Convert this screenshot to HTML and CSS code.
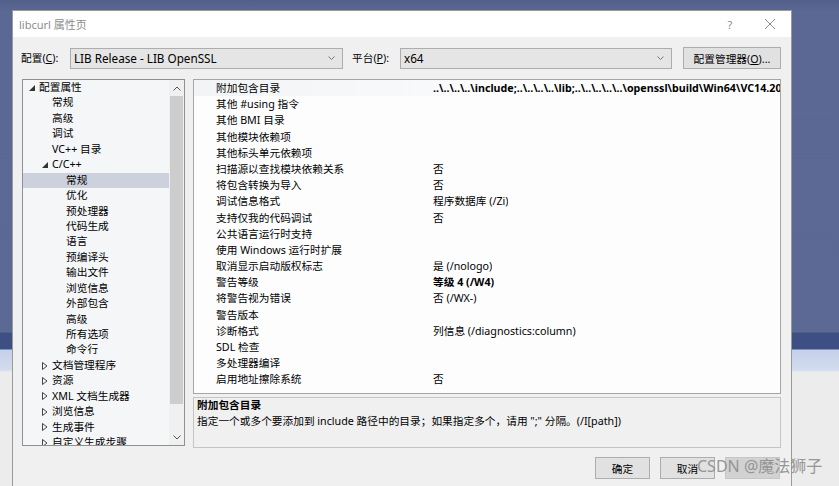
FILE: index.html
```html
<!DOCTYPE html>
<html lang="zh-CN">
<head>
    <meta charset="UTF-8">
    <title>libcurl 属性页</title>
    <link rel="stylesheet" href="styles.css">
</head>
<body>
    <div class="dialog">
        <div class="titlebar">
            <span class="title">libcurl 属性页</span>
            <span class="help">?</span>
            <svg class="close" width="12" height="12" viewBox="0 0 12 12"><path d="M1 1L11 11M11 1L1 11" stroke="#8a8a8a" stroke-width="1" fill="none"/></svg>
        </div>

        <div class="toolbar">
            <span class="tb-label">配置(<u>C</u>):</span>
            <div class="select cfg-select">
                <span>LIB Release - LIB OpenSSL</span>
                <svg class="chev" width="7" height="4" viewBox="0 0 7 4"><path d="M0.5 0.5L3.5 3.5L6.5 0.5" stroke="#777" fill="none"/></svg>
            </div>
            <span class="tb-label plat-label">平台(<u>P</u>):</span>
            <div class="select plat-select">
                <span>x64</span>
                <svg class="chev" width="7" height="4" viewBox="0 0 7 4"><path d="M0.5 0.5L3.5 3.5L6.5 0.5" stroke="#777" fill="none"/></svg>
            </div>
            <button class="btn btn-mgr">配置管理器(<u>O</u>)...</button>
        </div>

        <div class="main">
            <div class="tree">
                <ul class="tree-list">
                    <li class="lv0"><span class="arrow"><svg width="6" height="6" viewBox="0 0 6 6"><path d="M6 0V6H0Z" fill="#333"/></svg></span>配置属性</li>
                    <li class="lv1"><span class="arrow"></span>常规</li>
                    <li class="lv1"><span class="arrow"></span>高级</li>
                    <li class="lv1"><span class="arrow"></span>调试</li>
                    <li class="lv1"><span class="arrow"></span>VC++ 目录</li>
                    <li class="lv1"><span class="arrow"><svg width="6" height="6" viewBox="0 0 6 6"><path d="M6 0V6H0Z" fill="#333"/></svg></span>C/C++</li>
                    <li class="lv2 selected"><span class="arrow"></span>常规</li>
                    <li class="lv2"><span class="arrow"></span>优化</li>
                    <li class="lv2"><span class="arrow"></span>预处理器</li>
                    <li class="lv2"><span class="arrow"></span>代码生成</li>
                    <li class="lv2"><span class="arrow"></span>语言</li>
                    <li class="lv2"><span class="arrow"></span>预编译头</li>
                    <li class="lv2"><span class="arrow"></span>输出文件</li>
                    <li class="lv2"><span class="arrow"></span>浏览信息</li>
                    <li class="lv2"><span class="arrow"></span>外部包含</li>
                    <li class="lv2"><span class="arrow"></span>高级</li>
                    <li class="lv2"><span class="arrow"></span>所有选项</li>
                    <li class="lv2"><span class="arrow"></span>命令行</li>
                    <li class="lv1"><span class="arrow"><svg width="6" height="8" viewBox="0 0 6 8"><path d="M0.5 0.5L5 4L0.5 7.5Z" stroke="#444" fill="none"/></svg></span>文档管理程序</li>
                    <li class="lv1"><span class="arrow"><svg width="6" height="8" viewBox="0 0 6 8"><path d="M0.5 0.5L5 4L0.5 7.5Z" stroke="#444" fill="none"/></svg></span>资源</li>
                    <li class="lv1"><span class="arrow"><svg width="6" height="8" viewBox="0 0 6 8"><path d="M0.5 0.5L5 4L0.5 7.5Z" stroke="#444" fill="none"/></svg></span>XML 文档生成器</li>
                    <li class="lv1"><span class="arrow"><svg width="6" height="8" viewBox="0 0 6 8"><path d="M0.5 0.5L5 4L0.5 7.5Z" stroke="#444" fill="none"/></svg></span>浏览信息</li>
                    <li class="lv1"><span class="arrow"><svg width="6" height="8" viewBox="0 0 6 8"><path d="M0.5 0.5L5 4L0.5 7.5Z" stroke="#444" fill="none"/></svg></span>生成事件</li>
                    <li class="lv1"><span class="arrow"><svg width="6" height="8" viewBox="0 0 6 8"><path d="M0.5 0.5L5 4L0.5 7.5Z" stroke="#444" fill="none"/></svg></span>自定义生成步骤</li>
                </ul>
                <div class="vscroll">
                    <svg class="sb-arrow" width="8" height="5" viewBox="0 0 8 5"><path d="M0.5 4.5L4 1L7.5 4.5" stroke="#555" fill="none"/></svg>
                    <div class="sb-thumb"></div>
                    <svg class="sb-arrow sb-down" width="8" height="5" viewBox="0 0 8 5"><path d="M0.5 0.5L4 4L7.5 0.5" stroke="#555" fill="none"/></svg>
                </div>
            </div>

            <div class="right">
                <div class="grid">
                    <div class="row first"><span class="name">附加包含目录</span><span class="val bold">..\..\..\..\include;..\..\..\..\lib;..\..\..\..\..\openssl\build\Win64\VC14.20\include</span></div>
                    <div class="row"><span class="name">其他 #using 指令</span><span class="val"></span></div>
                    <div class="row"><span class="name">其他 BMI 目录</span><span class="val"></span></div>
                    <div class="row"><span class="name">其他模块依赖项</span><span class="val"></span></div>
                    <div class="row"><span class="name">其他标头单元依赖项</span><span class="val"></span></div>
                    <div class="row"><span class="name">扫描源以查找模块依赖关系</span><span class="val">否</span></div>
                    <div class="row"><span class="name">将包含转换为导入</span><span class="val">否</span></div>
                    <div class="row"><span class="name">调试信息格式</span><span class="val">程序数据库 (/Zi)</span></div>
                    <div class="row"><span class="name">支持仅我的代码调试</span><span class="val">否</span></div>
                    <div class="row"><span class="name">公共语言运行时支持</span><span class="val"></span></div>
                    <div class="row"><span class="name">使用 Windows 运行时扩展</span><span class="val"></span></div>
                    <div class="row"><span class="name">取消显示启动版权标志</span><span class="val">是 (/nologo)</span></div>
                    <div class="row"><span class="name">警告等级</span><span class="val bold">等级 4 (/W4)</span></div>
                    <div class="row"><span class="name">将警告视为错误</span><span class="val">否 (/WX-)</span></div>
                    <div class="row"><span class="name">警告版本</span><span class="val"></span></div>
                    <div class="row"><span class="name">诊断格式</span><span class="val">列信息 (/diagnostics:column)</span></div>
                    <div class="row"><span class="name">SDL 检查</span><span class="val"></span></div>
                    <div class="row"><span class="name">多处理器编译</span><span class="val"></span></div>
                    <div class="row"><span class="name">启用地址擦除系统</span><span class="val">否</span></div>
                </div>
                <div class="desc">
                    <div class="desc-title">附加包含目录</div>
                    <div class="desc-text">指定一个或多个要添加到 include 路径中的目录；如果指定多个，请用 ";" 分隔。(/I[path])</div>
                </div>
            </div>
        </div>

        <div class="footer">
            <button class="btn btn-foot">确定</button>
            <button class="btn btn-foot">取消</button>
            <button class="btn btn-foot btn-off"></button>
        </div>
    </div>

    <div class="watermark">CSDN @魔法狮子</div>
</body>
</html>
```

FILE: styles.css
```css
body {
    margin: 0;
    width: 839px;
    height: 486px;
    overflow: hidden;
    position: relative;
    font-family: "Noto Sans", "Noto Sans CJK SC", sans-serif;
    font-size: 10.7px;
    color: #000;
    background: linear-gradient(to bottom,
        #515f8a 0, #5a6893 12px, #5b6994 332px,
        #3e5083 333px, #3e5083 349px,
        #c4d1ea 350px, #d3dcee 370px,
        #ececec 372px, #ececec 100%);
}

.dialog {
    margin: 10px 0 0 12px;
    width: 778px;
    height: 476px;
    border: 1px solid #9a9a9a;
    border-bottom: none;
    background-color: #f0f0f0;
    display: flex;
    flex-direction: column;
}

/* заголовок окна */
.titlebar {
    height: 26px;
    background-color: #fff;
    display: flex;
    align-items: center;
    padding: 0 15px 0 6px;
}

.title {
    color: #8c8c8c;
    font-size: 11px;
}

.help {
    margin-left: auto;
    color: #8a8a8a;
    width: 12px;
    font-size: 11px;
    text-align: center;
}

.close {
    margin-left: 28px;
}

/* строка конфигурации */
.toolbar {
    display: flex;
    align-items: center;
    height: 22px;
    margin-top: 10px;
    padding-left: 8px;
}

.tb-label {
    width: 49px;
    line-height: 22px;
}

.plat-label {
    width: 48px;
    margin-left: 9px;
}

.select {
    box-sizing: border-box;
    height: 21px;
    border: 1px solid #adadad;
    background-color: #e5e5e5;
    display: flex;
    align-items: center;
    padding: 0 7px 0 3px;
    font-size: 11.7px;
}

.select span {
    flex: 1;
}

.cfg-select {
    width: 273px;
}

.plat-select {
    width: 272px;
}

.btn {
    box-sizing: border-box;
    font-family: inherit;
    font-size: 10.7px;
    color: #000;
    background-color: #e1e1e1;
    border: 1px solid #adadad;
    padding: 0;
}

.btn-mgr {
    width: 98px;
    height: 22px;
    margin-left: 11px;
}

/* основная область */
.main {
    display: flex;
    margin-top: 10px;
    padding-left: 9px;
}

.tree {
    box-sizing: border-box;
    width: 163px;
    height: 367px;
    border: 1px solid #8c9098;
    background-color: #f5f6f8;
    display: flex;
    overflow: hidden;
}

.tree-list {
    list-style: none;
    margin: 0;
    padding: 0;
    flex: 1;
}

.tree-list li {
    height: 15.45px;
    line-height: 15.45px;
    display: flex;
    align-items: center;
    white-space: nowrap;
}

.arrow {
    width: 12px;
    display: flex;
    align-items: center;
    padding-left: 2px;
    box-sizing: border-box;
}

.lv0 { padding-left: 4px; }
.lv1 { padding-left: 17px; }
.lv2 { padding-left: 31px; }

.tree-list li.selected {
    background-color: #cdd1dd;
}

.vscroll {
    width: 15px;
    background-color: #f0f0f0;
    display: flex;
    flex-direction: column;
    align-items: center;
}

.sb-arrow {
    margin-top: 6px;
}

.sb-thumb {
    width: 13px;
    height: 308px;
    margin-top: 5px;
    background-color: #cdcdcd;
}

.sb-down {
    margin-top: 31px;
}

.right {
    margin-left: 8px;
    width: 588px;
    display: flex;
    flex-direction: column;
}

/* таблица свойств */
.grid {
    box-sizing: border-box;
    height: 315px;
    border: 1px solid #a6a6a6;
    background-color: #fdfdfe;
    overflow: hidden;
}

.row {
    display: flex;
    height: 16.2px;
    line-height: 16.2px;
    white-space: nowrap;
}

.row.first {
    background: linear-gradient(to right, #f3f4f6 0, #f8f9fa 235px, #fdfdfe 300px);
}

.name {
    width: 217px;
    padding-left: 22px;
    flex: none;
}

.val {
    overflow: hidden;
}

.bold {
    font-weight: bold;
}

.desc {
    box-sizing: border-box;
    height: 51px;
    margin-top: 3px;
    border: 1px solid #c4c4c4;
    background-color: #f0f0f0;
    padding: 0 3px;
    line-height: 16px;
}

.desc-title {
    font-weight: bold;
    margin-top: -1px;
}

/* кнопки */
.footer {
    display: flex;
    justify-content: flex-end;
    gap: 10px;
    margin-top: 9px;
    padding-right: 11px;
}

.btn-foot {
    width: 55px;
    height: 22px;
}

.btn-off {
    background-color: #d2d2d2;
    border-color: #c6c6c6;
}

.watermark {
    position: absolute;
    left: 697px;
    top: 455px;
    font-size: 16px;
    line-height: 22px;
    color: #8e8e8e;
    opacity: 0.9;
}
```
